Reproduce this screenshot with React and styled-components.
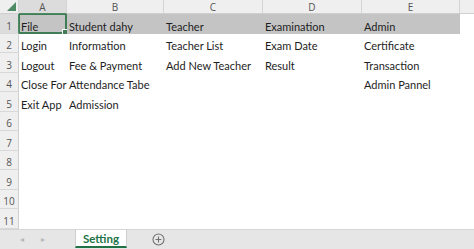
import React from 'react'
import styled, { createGlobalStyle } from 'styled-components'

const COLUMNS = ['A', 'B', 'C', 'D', 'E', '']
const ROW_COUNT = 11

const DATA = [
  ['File', 'Student dahy', 'Teacher', 'Examination', 'Admin'],
  ['Login', 'Information', 'Teacher List', 'Exam Date', 'Certificate'],
  ['Logout', 'Fee & Payment', 'Add New Teacher', 'Result', 'Transaction'],
  ['Close Form', 'Attendance Tabe', '', '', 'Admin Pannel'],
  ['Exit App', 'Admission', '', '', ''],
]

const GlobalStyle = createGlobalStyle`
  html, body {
    margin: 0;
    padding: 0;
    background: #ffffff;
  }
  body {
    font-family: Lato, "Open Sans", sans-serif;
    overflow: hidden;
  }
`

export default function App() {
  const rows = Array.from({ length: ROW_COUNT }, (_, i) => i)

  return (
    <>
      <GlobalStyle />
      <Workbook>
        <Sheet>
          <Corner>
            <CornerMark />
          </Corner>
          {COLUMNS.map((col, i) => (
            <ColHeader key={col + i} selected={i === 0} last={i === COLUMNS.length - 1}>
              {col}
            </ColHeader>
          ))}
          {rows.map((r) => (
            <React.Fragment key={r}>
              <RowHeader selected={r === 0}>{r + 1}</RowHeader>
              {COLUMNS.map((col, c) => {
                const text = DATA[r] && c < 5 ? DATA[r][c] : ''
                return (
                  <Cell key={c} filled={r === 0 && c < 5}>
                    {text}
                    {r === 0 && c === 0 && (
                      <Selection>
                        <FillHandle />
                      </Selection>
                    )}
                  </Cell>
                )
              })}
            </React.Fragment>
          ))}
        </Sheet>
        <TabBar>
          <NavArrows>
            <Arrow>◂</Arrow>
            <Arrow>▸</Arrow>
          </NavArrows>
          <SheetTab>Setting</SheetTab>
          <AddSheet>
            <svg width="13" height="13" viewBox="0 0 13 13">
              <circle cx="6.5" cy="6.5" r="5.5" fill="none" stroke="#707070" strokeWidth="1.1" />
              <path d="M6.5 3.6v5.8M3.6 6.5h5.8" stroke="#707070" strokeWidth="1.1" />
            </svg>
          </AddSheet>
        </TabBar>
      </Workbook>
    </>
  )
}

const Workbook = styled.div`
  width: 474px;
  height: 249px;
  display: flex;
  flex-direction: column;
  background: #ffffff;
`

const Sheet = styled.div`
  display: grid;
  grid-template-columns: 19px 48px 97px 99px 99px 98px 1fr;
  grid-template-rows: 14px repeat(11, 19.5px);
  height: 229px;
  overflow: hidden;
`

const Corner = styled.div`
  position: relative;
  background: #efefef;
  border-right: 1px solid #d4d4d4;
  border-bottom: 1px solid #cfcfcf;
`

const CornerMark = styled.div`
  position: absolute;
  right: 2px;
  bottom: 2px;
  width: 0;
  height: 0;
  border-left: 9px solid transparent;
  border-bottom: 9px solid #4e8a64;
`

const ColHeader = styled.div`
  background: ${(p) => (p.selected ? '#dcdcdc' : '#efefef')};
  border-right: ${(p) => (p.last ? 'none' : '1px solid #d4d4d4')};
  border-bottom: 1px solid ${(p) => (p.selected ? '#4e8a64' : '#cfcfcf')};
  color: #555;
  font-size: 10px;
  line-height: 14px;
  text-align: center;
  font-family: "Open Sans", Lato, sans-serif;
`

const RowHeader = styled.div`
  background: ${(p) => (p.selected ? '#dcdcdc' : '#efefef')};
  border-right: 1px solid ${(p) => (p.selected ? '#4e8a64' : '#cfcfcf')};
  border-bottom: 1px solid #d8d8d8;
  color: #555;
  font-size: 10px;
  font-family: "Open Sans", Lato, sans-serif;
  display: flex;
  align-items: flex-end;
  justify-content: center;
  padding-bottom: 0;
  box-sizing: border-box;
`

const Cell = styled.div`
  position: relative;
  background: ${(p) => (p.filled ? '#c4c4c4' : '#ffffff')};
  color: #1e1e1e;
  font-size: 11px;
  padding: 0 0 1px 2px;
  box-sizing: border-box;
  display: flex;
  align-items: flex-end;
  white-space: nowrap;
  overflow: hidden;
`

const Selection = styled.div`
  position: absolute;
  inset: -1px 0 0 -1px;
  border: 2px solid #3f7d57;
  pointer-events: none;
`

const FillHandle = styled.div`
  position: absolute;
  right: -3px;
  bottom: -3px;
  width: 4px;
  height: 4px;
  background: #3f7d57;
  border: 1px solid #ffffff;
`

const TabBar = styled.div`
  flex: 1;
  display: flex;
  align-items: stretch;
  background: #e6e6e6;
  border-top: 1px solid #d6d6d6;
  box-sizing: border-box;
`

const NavArrows = styled.div`
  width: 75px;
  display: flex;
  align-items: center;
  gap: 17px;
  padding-left: 20px;
  box-sizing: border-box;
`

const Arrow = styled.span`
  color: #b8b8b8;
  font-size: 8px;
  font-family: "DejaVu Sans", sans-serif;
`

const SheetTab = styled.div`
  width: 52px;
  margin-bottom: 1px;
  background: #ffffff;
  color: #217346;
  font-weight: 700;
  font-size: 11.5px;
  display: flex;
  align-items: center;
  justify-content: center;
  border-left: 1px solid #cfcfcf;
  border-right: 1px solid #cfcfcf;
  border-bottom: 2px solid #217346;
  box-sizing: border-box;
`

const AddSheet = styled.div`
  display: flex;
  align-items: center;
  padding-left: 25px;
`
